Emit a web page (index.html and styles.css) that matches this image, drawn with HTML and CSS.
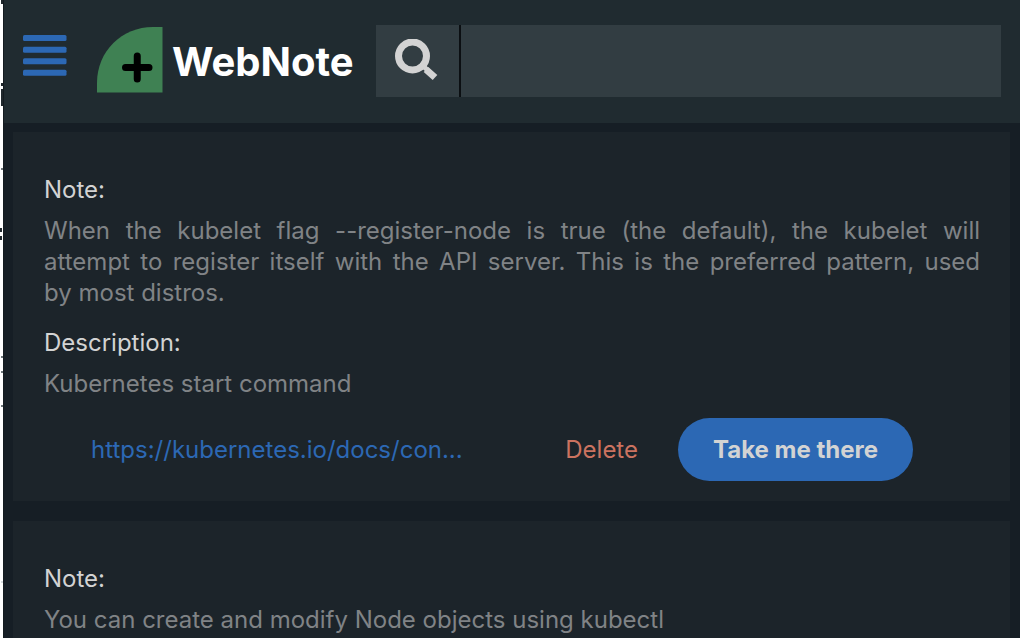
FILE: index.html
```html
<!DOCTYPE html>
<html lang="en">
<head>
<meta charset="utf-8">
<meta name="viewport" content="width=device-width, initial-scale=1">
<title>WebNote</title>
<link rel="stylesheet" href="styles.css">
</head>
<body>
<div class="edge" aria-hidden="true">
  <svg class="edge-marks" width="3" height="638" viewBox="0 0 3 638">
    <path fill="#20282d" d="M1 0h2v4H1zM1 83h2v3H1zM1 89h2v17H1zM0 228h2v4H0zM0 236h2v4H0z"/>
    <path fill="#6f777b" d="M1 168h2v2H1zM1 356h2v2H1zM1 371h2v2H1zM1 405h2v2H1z"/>
    <path fill="#d5dadd" d="M1 581h2v2H1z"/>
  </svg>
</div>
<div class="app">
  <header class="topbar">
    <button class="menu" type="button" aria-label="Menu">
      <svg width="44" height="42" viewBox="0 0 44 42" fill="#2c68b4">
        <rect x="0" y="0" width="43.500" height="6" rx="1.500"/>
        <rect x="0" y="11.700" width="43.500" height="6" rx="1.500"/>
        <rect x="0" y="23.300" width="43.500" height="6" rx="1.500"/>
        <rect x="0" y="34.700" width="43.500" height="6" rx="1.500"/>
      </svg>
    </button>
    <div class="brand">
      <svg width="66" height="66" viewBox="0 0 66 66">
        <path fill="#3f8153" d="M0 65.500V56C0 24 25 0 56 0h9.500v65.500z"/>
        <path fill="none" stroke="#000" stroke-width="7" stroke-linecap="round" d="M28.500 40.500h23.500M40.250 29v23"/>
      </svg>
      <h1 class="brand-name">WebNote</h1>
    </div>
    <form class="search" role="search">
      <button class="search-button" type="button" aria-label="Search">
        <svg width="44" height="42" viewBox="0 0 44 42" fill="none" stroke="#d3d3d3">
          <circle cx="17.500" cy="17" r="14" stroke-width="7"/>
          <path stroke-width="5" d="M26.500 25.500L34 32.500"/>
          <path stroke-width="7" stroke-linejoin="round" d="M31 30.500l9 8"/>
        </svg>
      </button>
      <input class="search-input" type="text" aria-label="Search notes">
    </form>
  </header>
  <main class="notes">
    <article class="card">
      <h2 class="label">Note:</h2>
      <p class="text">When the kubelet flag --register-node is true (the default), the kubelet will attempt&nbsp;to&nbsp;register itself with the API server. This is the preferred pattern, used by&nbsp;most&nbsp;distros.</p>
      <h2 class="label">Description:</h2>
      <p class="text">Kubernetes start command</p>
      <div class="actions">
        <a class="source" href="#">https://kubernetes.io/docs/con...</a>
        <button class="delete" type="button">Delete</button>
        <button class="visit" type="button">Take me there</button>
      </div>
    </article>
    <article class="card">
      <h2 class="label">Note:</h2>
      <p class="text">You can create and modify Node objects using kubectl</p>
    </article>
  </main>
</div>
</body>
</html>
```
FILE: styles.css
```css
* {
  box-sizing: border-box;
}

body {
  display: flex;
  height: 100vh;
  margin: 0;
  overflow: hidden;
  background: #161e25;
  color: #d3d3d3;
  font: 24px/31px Inter, "Liberation Sans", sans-serif;
}

button {
  padding: 0;
  border: 0;
  background: none;
  color: inherit;
  font: inherit;
  cursor: pointer;
}

svg {
  display: block;
}

.edge {
  position: relative;
  flex: none;
  width: 4px;
  background: #fff;
  border-right: 1px solid #141b20;
}

.edge-marks {
  position: absolute;
  top: 0;
  left: 0;
}

.app {
  flex: 1;
  min-width: 0;
  overflow: hidden;
}

.topbar {
  display: flex;
  align-items: center;
  height: 123px;
  padding: 0 19px;
  background: #202b30;
}

.menu {
  flex: none;
  margin: 0 30px 11px 0;
}

.brand {
  display: flex;
  align-items: center;
  gap: 9px;
  margin-right: 22px;
  padding-bottom: 4px;
}

.brand-name {
  margin: 0;
  padding-top: 4px;
  color: #fff;
  font-size: 40px;
  line-height: 48px;
  font-weight: 700;
}

.search {
  display: flex;
  flex: 1;
  min-width: 0;
  height: 72px;
  margin-bottom: 2px;
}

.search-button {
  display: flex;
  flex: none;
  align-items: center;
  justify-content: center;
  width: 85px;
  padding-bottom: 2px;
  background: #323d42;
  border-right: 2px solid #0b0f12;
}

.search-input {
  flex: 1;
  min-width: 0;
  padding: 0 16px;
  border: 0;
  border-radius: 0;
  outline: 0;
  background: #323d42;
  color: #d3d3d3;
  font: inherit;
}

.notes {
  display: flex;
  flex-direction: column;
  gap: 20px;
  padding: 9px 10px 9px 9px;
}

.card {
  padding: 42px 30px 20px 31px;
  background: #1c242a;
}

.label {
  margin: 0 0 10px;
  color: #d3d3d3;
  font-size: 24px;
  line-height: 31px;
  font-weight: 400;
}

.text {
  margin: 0 0 19px;
  color: #808386;
  text-align: justify;
}

.actions {
  display: flex;
  align-items: center;
  gap: 40px;
  padding: 0 67px 0 47px;
}

.source {
  flex: 1;
  min-width: 0;
  overflow: hidden;
  color: #2c68b4;
  text-decoration: none;
  text-overflow: ellipsis;
  white-space: nowrap;
}

.delete {
  color: #cb7360;
}

.visit {
  padding: 16px 35px;
  border-radius: 32px;
  background: #2c68b4;
  color: #d3d3d3;
  font-weight: 700;
}
```
